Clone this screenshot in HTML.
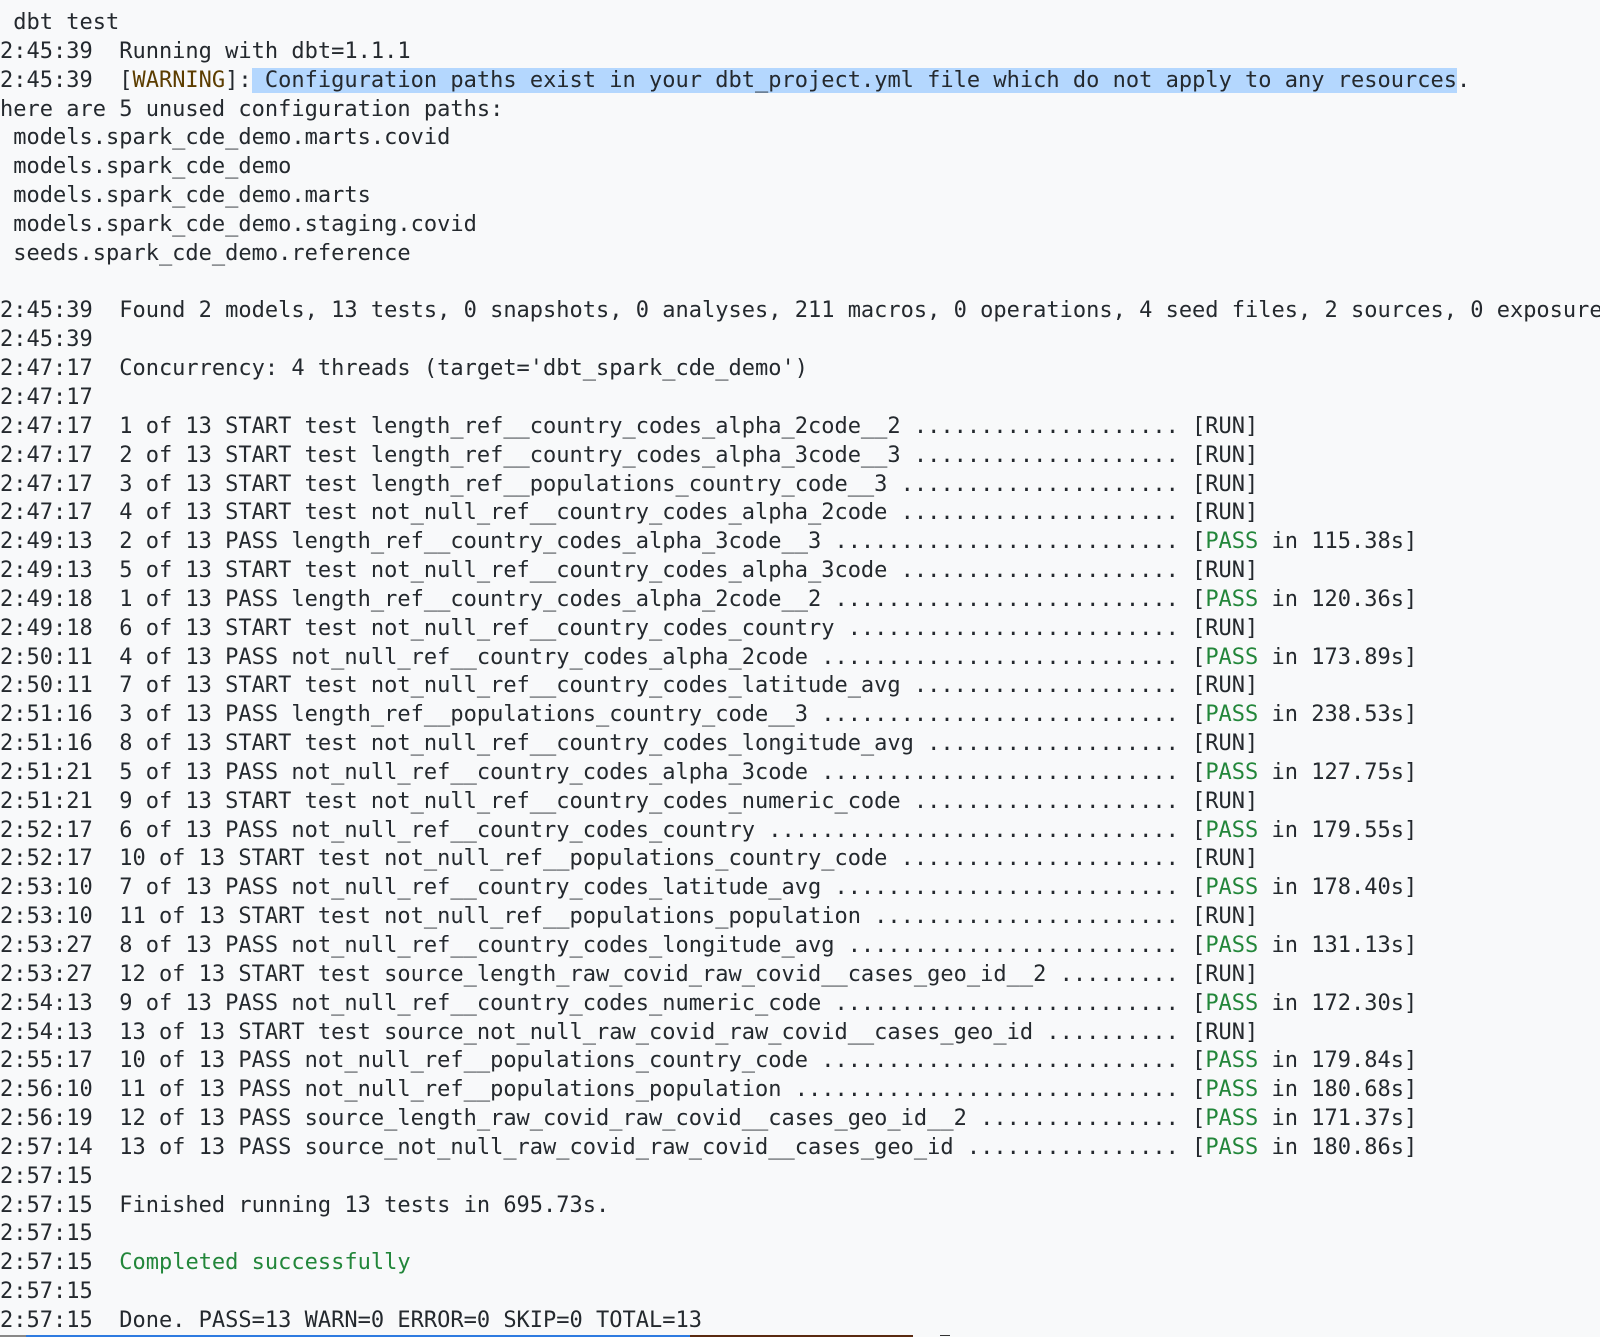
<!DOCTYPE html>
<html><head><meta charset="utf-8"><style>
html,body{margin:0;padding:0;background:#f8f9fa;width:1600px;height:1337px;overflow:hidden;position:relative}
pre{margin:0;position:absolute;left:0;top:9px;font-family:"DejaVu Sans Mono","Liberation Mono",monospace;font-size:22px;line-height:28.85px;color:#24292e;white-space:pre}
.w{color:#5c3d00}.g{color:#22863a}.h{background:#b4d7fe}
.bar{position:absolute;bottom:0;height:2px}
</style></head><body>
<pre> dbt test
2:45:39  Running with dbt=1.1.1
2:45:39  [<span class="w">WARNING</span>]:<span class="h"> Configuration paths exist in your dbt_project.yml file which do not apply to any resources</span>.
here are 5 unused configuration paths:
 models.spark_cde_demo.marts.covid
 models.spark_cde_demo
 models.spark_cde_demo.marts
 models.spark_cde_demo.staging.covid
 seeds.spark_cde_demo.reference

2:45:39  Found 2 models, 13 tests, 0 snapshots, 0 analyses, 211 macros, 0 operations, 4 seed files, 2 sources, 0 exposures
2:45:39
2:47:17  Concurrency: 4 threads (target='dbt_spark_cde_demo')
2:47:17
2:47:17  1 of 13 START test length_ref__country_codes_alpha_2code__2 .................... [RUN]
2:47:17  2 of 13 START test length_ref__country_codes_alpha_3code__3 .................... [RUN]
2:47:17  3 of 13 START test length_ref__populations_country_code__3 ..................... [RUN]
2:47:17  4 of 13 START test not_null_ref__country_codes_alpha_2code ..................... [RUN]
2:49:13  2 of 13 PASS length_ref__country_codes_alpha_3code__3 .......................... [<span class="g">PASS</span> in 115.38s]
2:49:13  5 of 13 START test not_null_ref__country_codes_alpha_3code ..................... [RUN]
2:49:18  1 of 13 PASS length_ref__country_codes_alpha_2code__2 .......................... [<span class="g">PASS</span> in 120.36s]
2:49:18  6 of 13 START test not_null_ref__country_codes_country ......................... [RUN]
2:50:11  4 of 13 PASS not_null_ref__country_codes_alpha_2code ........................... [<span class="g">PASS</span> in 173.89s]
2:50:11  7 of 13 START test not_null_ref__country_codes_latitude_avg .................... [RUN]
2:51:16  3 of 13 PASS length_ref__populations_country_code__3 ........................... [<span class="g">PASS</span> in 238.53s]
2:51:16  8 of 13 START test not_null_ref__country_codes_longitude_avg ................... [RUN]
2:51:21  5 of 13 PASS not_null_ref__country_codes_alpha_3code ........................... [<span class="g">PASS</span> in 127.75s]
2:51:21  9 of 13 START test not_null_ref__country_codes_numeric_code .................... [RUN]
2:52:17  6 of 13 PASS not_null_ref__country_codes_country ............................... [<span class="g">PASS</span> in 179.55s]
2:52:17  10 of 13 START test not_null_ref__populations_country_code ..................... [RUN]
2:53:10  7 of 13 PASS not_null_ref__country_codes_latitude_avg .......................... [<span class="g">PASS</span> in 178.40s]
2:53:10  11 of 13 START test not_null_ref__populations_population ....................... [RUN]
2:53:27  8 of 13 PASS not_null_ref__country_codes_longitude_avg ......................... [<span class="g">PASS</span> in 131.13s]
2:53:27  12 of 13 START test source_length_raw_covid_raw_covid__cases_geo_id__2 ......... [RUN]
2:54:13  9 of 13 PASS not_null_ref__country_codes_numeric_code .......................... [<span class="g">PASS</span> in 172.30s]
2:54:13  13 of 13 START test source_not_null_raw_covid_raw_covid__cases_geo_id .......... [RUN]
2:55:17  10 of 13 PASS not_null_ref__populations_country_code ........................... [<span class="g">PASS</span> in 179.84s]
2:56:10  11 of 13 PASS not_null_ref__populations_population ............................. [<span class="g">PASS</span> in 180.68s]
2:56:19  12 of 13 PASS source_length_raw_covid_raw_covid__cases_geo_id__2 ............... [<span class="g">PASS</span> in 171.37s]
2:57:14  13 of 13 PASS source_not_null_raw_covid_raw_covid__cases_geo_id ................ [<span class="g">PASS</span> in 180.86s]
2:57:15
2:57:15  Finished running 13 tests in 695.73s.
2:57:15
2:57:15  <span class="g">Completed successfully</span>
2:57:15
2:57:15  Done. PASS=13 WARN=0 ERROR=0 SKIP=0 TOTAL=13</pre>
<div class="bar" style="left:0;width:26px;background:#888"></div>
<div class="bar" style="left:26px;width:664px;background:#2f7be0"></div>
<div class="bar" style="left:690px;width:223px;background:#5a2a10"></div>
<div class="bar" style="left:940px;width:10px;height:1px;bottom:1px;background:#333"></div>
</body></html>
